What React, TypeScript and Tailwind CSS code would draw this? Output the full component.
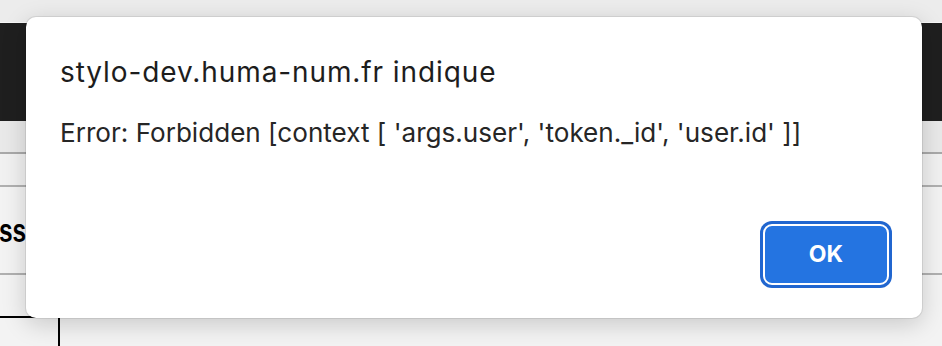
import React from "react";

const sf = { fontFamily: "Inter, 'Noto Sans', sans-serif" };

export default function App() {
  return (
    <div className="relative w-[942px] h-[346px] overflow-hidden bg-[#f3f3f3]">
      {/* page behind the alert */}
      <div className="flex flex-col">
        <div className="h-[23px] bg-[#ececec] border-b border-[#f7f7f7]" />
        <div className="h-[98px] bg-[#1f1f1f]" />
        <div className="h-[33px] bg-[#e9e9e9] border-b-2 border-[#a9a9a9]" />
        <div className="h-[33px] bg-[#f1f1f1] border-b-2 border-[#b0b0b0]" />
        <div className="h-[88px] bg-[#f3f3f3] border-b-2 border-[#b0b0b0] flex items-center">
          <span
            className="inline-block ml-[-1px] text-[34px] leading-[40px] font-bold text-black scale-x-[0.72] origin-left"
            style={{ fontFamily: "'Liberation Sans', Arial, sans-serif" }}
          >
            ss
          </span>
        </div>
        <div className="h-[41px]" />
        <div className="w-[60px] h-[40px] border-t-2 border-r-2 border-black" />
      </div>

      {/* alert dialog */}
      <div
        className="absolute left-[26px] top-[17px] w-[896px] h-[301px] rounded-[10px] bg-white shadow-[0_0_0_1px_rgba(0,0,0,0.08),0_6px_24px_rgba(0,0,0,0.18)] flex flex-col pl-[34px] pr-[30px]"
        style={sf}
      >
        <h1 className="mt-[37px] text-[28px] leading-[36px] tracking-[0.9px] text-[#1d1d1d]">
          stylo-dev.huma-num.fr indique
        </h1>
        <p className="mt-[27px] text-[26.1px] leading-[32px] text-[#262626]">
          Error: Forbidden [context [ 'args.user', 'token._id', 'user.id' ]]
        </p>
        <div className="flex-1 flex items-end justify-end pb-[30px]">
          <div className="rounded-[12px] bg-[#2166cf] p-[3px]">
            <button className="w-[126px] h-[61px] rounded-[9px] border-2 border-white bg-[#2474e1] text-white text-[23px] font-bold">
              OK
            </button>
          </div>
        </div>
      </div>
    </div>
  );
}
